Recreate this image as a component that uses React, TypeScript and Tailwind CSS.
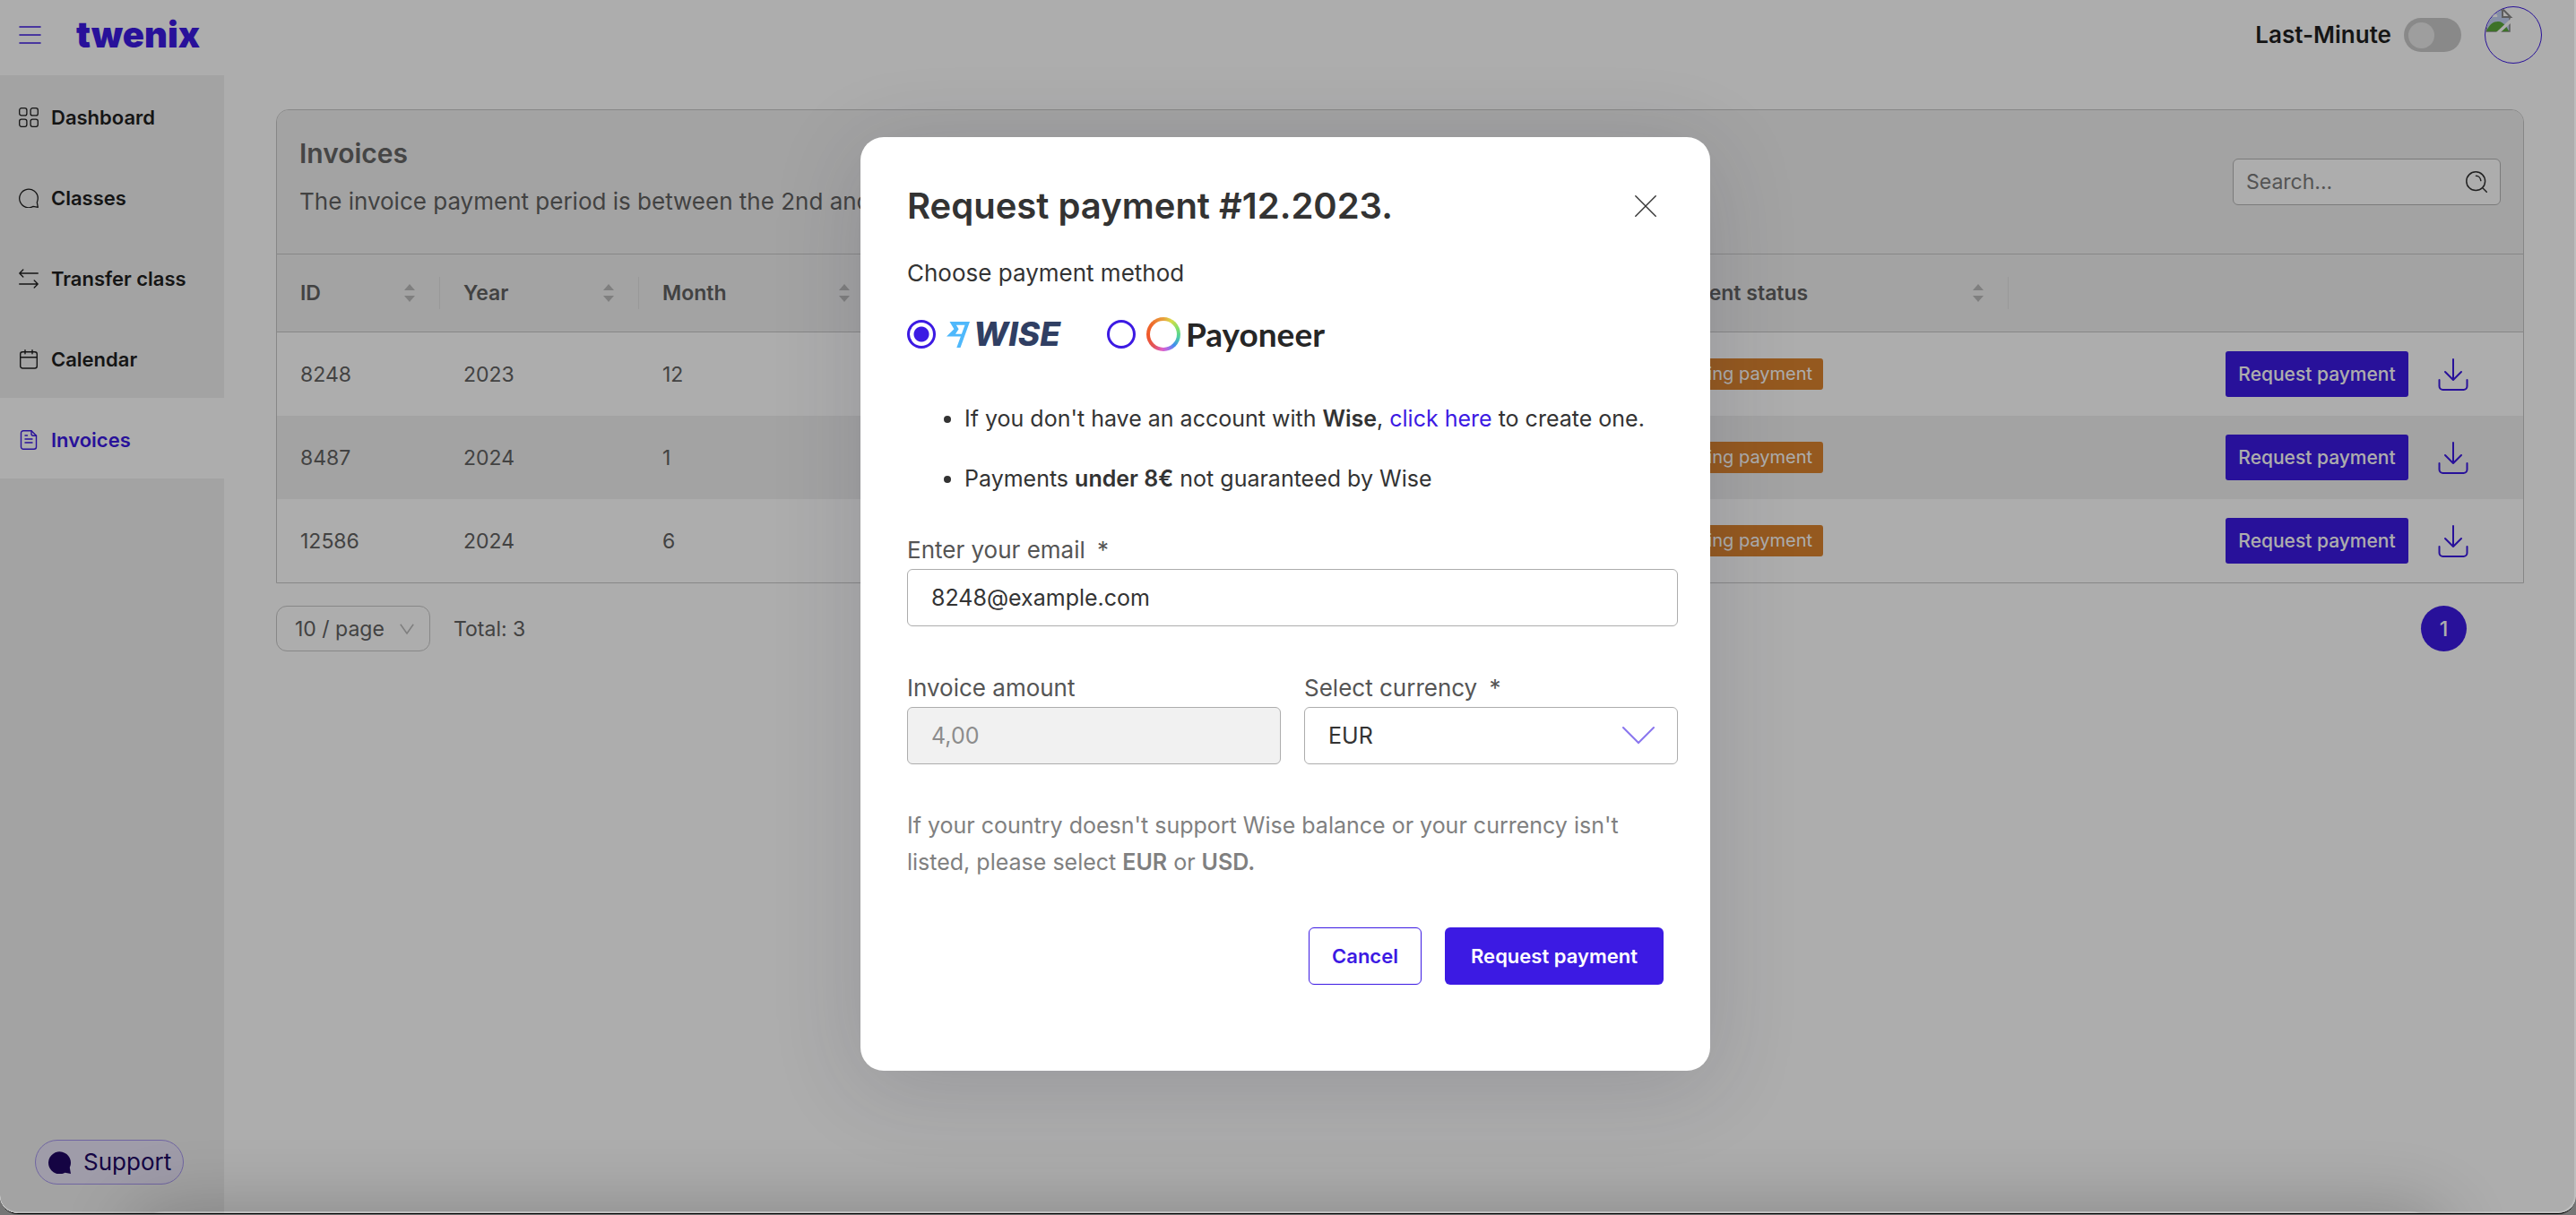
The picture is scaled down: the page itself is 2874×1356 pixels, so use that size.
import React, { useState } from 'react';

const NAV = [
  { id: 'dashboard', label: 'Dashboard', icon: <DashboardIcon /> },
  { id: 'classes', label: 'Classes', icon: <ChatIcon /> },
  { id: 'transfer', label: 'Transfer class', icon: <TransferIcon /> },
  { id: 'calendar', label: 'Calendar', icon: <CalendarIcon /> },
  { id: 'invoices', label: 'Invoices', icon: <InvoiceIcon /> },
];

const INVOICES = [
  { id: 8248, year: 2023, month: 12, status: 'Pending payment' },
  { id: 8487, year: 2024, month: 1, status: 'Pending payment' },
  { id: 12586, year: 2024, month: 6, status: 'Pending payment' },
];

function DashboardIcon() {
  return (
    <svg viewBox="0 0 22 22" className="size-[22px]" fill="none" stroke="currentColor" strokeWidth="1.3">
      <rect x="0.7" y="0.7" width="8.2" height="8.2" rx="2.2" />
      <rect x="13.1" y="0.7" width="8.2" height="8.2" rx="2.2" />
      <rect x="0.7" y="13.1" width="8.2" height="8.2" rx="2.2" />
      <rect x="13.1" y="13.1" width="8.2" height="8.2" rx="2.2" />
    </svg>
  );
}

function ChatIcon() {
  return (
    <svg viewBox="0 0 22 22" className="size-[22px]" fill="none" stroke="currentColor" strokeWidth="1.3" strokeLinejoin="round">
      <path d="M21.3 21.3l-5.2-.9A10.3 10.3 0 1 1 21.3 11c0 1.9-.5 3.6-1 4.9z" />
    </svg>
  );
}

function TransferIcon() {
  return (
    <svg viewBox="0 0 22 22" className="size-[22px]" fill="none" stroke="currentColor" strokeWidth="1.3" strokeLinecap="round" strokeLinejoin="round">
      <path d="M21.3 5H.8M4.8 1L.8 5l4 4M.7 17h20.5M17.2 13l4 4-4 4" />
    </svg>
  );
}

function CalendarIcon() {
  return (
    <svg viewBox="0 0 22 22" className="size-[22px]" fill="none" stroke="currentColor" strokeWidth="1.4" strokeLinecap="round">
      <rect x="1.7" y="2.7" width="18.6" height="18.3" rx="2.5" />
      <path d="M1.7 8.7h18.6M7 .8v4M15 .8v4" />
    </svg>
  );
}

function InvoiceIcon() {
  return (
    <svg viewBox="0 0 22 22" className="size-[22px]" fill="none" stroke="currentColor" strokeWidth="1.4" strokeLinecap="round" strokeLinejoin="round">
      <path d="M14 .8H5A2.5 2.5 0 0 0 2.5 3.3v15.4A2.5 2.5 0 0 0 5 21.2h12a2.5 2.5 0 0 0 2.5-2.5V6.2z" />
      <path d="M14 .8v3.4a2 2 0 0 0 2 2h3.5M7 6h2.5M7 10h8M7 14h8" />
    </svg>
  );
}

function Sorter() {
  return (
    <svg viewBox="0 0 12 20" className="h-5 w-3 shrink-0" fill="#bcbcbc" aria-hidden="true">
      <path d="M6 0l6 7H0zM0 13h12l-6 7z" />
    </svg>
  );
}

function DownloadIcon() {
  return (
    <svg viewBox="0 0 34 36" className="h-9 w-[34px]" fill="none" stroke="currentColor" strokeWidth="2" strokeLinecap="round" strokeLinejoin="round">
      <path d="M17 1v22M8 15l9 9 9-9M1.5 24v7a4 4 0 0 0 4 4h23a4 4 0 0 0 4-4v-7" />
    </svg>
  );
}

function Header() {
  return (
    <header className="flex h-[84px] items-center justify-between pb-1.5 pl-[21px] pr-[38px]">
      <div className="flex items-center gap-[39px]">
        <button type="button" aria-label="Menu" className="text-[#3c1ae3]">
          <svg viewBox="0 0 25 20" className="h-5 w-[25px]" stroke="currentColor" strokeWidth="1.6" strokeLinecap="round">
            <path d="M1 1h23M1 10h23M1 19h23" />
          </svg>
        </button>
        <a href="#home" className="text-[40px] leading-[48px] font-black text-[#3c1ae3]">twenix</a>
      </div>
      <div className="flex items-center">
        <label htmlFor="last-minute" className="mr-3.5 text-[26px] leading-8 font-semibold text-[#1f1f1f]">Last-Minute</label>
        <input
          id="last-minute"
          type="checkbox"
          role="switch"
          className="mr-[26px] flex h-[38px] w-16 appearance-none items-center rounded-full bg-[#cbcbcb] px-[5px] before:size-[29px] before:rounded-full before:bg-[#e9e9e9] checked:justify-end checked:bg-[#3c1ae3]"
        />
        {/* broken avatar */}
        <div role="img" aria-label="Avatar" className="size-16 overflow-hidden rounded-full border border-[#3c1ae3]">
          <svg viewBox="0 0 64 64" className="size-16">
            <path d="M1 3h18l8 8v16H1z" fill="#c6d5f5" stroke="#8a8a8a" strokeWidth="1.5" />
            <path d="M1 27c3-8 8-11 13-11s9 4 12 11z" fill="#5aa83c" />
            <path d="M12 28l16-15v5L17 28z" fill="#fff" />
            <path d="M19 2v9h9z" fill="#fff" stroke="#8a8a8a" strokeWidth="2" />
            <path d="M2 11c2-4 6-5 9-4 2 1 3 3 2 4z" fill="#fff" />
          </svg>
        </div>
      </div>
    </header>
  );
}

function Sidebar() {
  const active = 'invoices';

  return (
    <aside className="flex w-[250px] shrink-0 flex-col justify-between bg-[#f1f1f1] pb-8">
      <nav>
        {NAV.map(item => (
          <a
            key={item.id}
            href={`#${item.id}`}
            className={`flex h-[90px] items-center gap-3.5 pl-[21px] pt-1 text-[22px] leading-7 font-semibold ${
              item.id === active ? 'bg-white text-[#3c1ae3]' : 'text-[#1f1f1f]'
            }`}
          >
            {item.icon}
            {item.label}
          </a>
        ))}
      </nav>
      <button
        type="button"
        className="ml-[39px] flex h-[50px] w-[166px] items-center gap-3.5 rounded-full border border-[#a596ee] bg-[#ebe6fa] pl-3.5 text-[26px] leading-8 text-[#200764]"
      >
        <svg viewBox="0 0 25 25" className="size-[25px]" fill="currentColor">
          <path d="M25 25l-6.500-1.200A12.500 12.500 0 1 1 25 12.500c0 2.500-.6 4-1.200 5.500z" />
        </svg>
        Support
      </button>
    </aside>
  );
}

function InvoiceTable() {
  return (
    <section>
      <div className="rounded-t-[14px] border border-[#c7c7c7]">
        <div className="flex h-[161px] items-center justify-between rounded-t-[13px] border-b border-[#c7c7c7] bg-[#f1f1f1] px-[25px]">
          <div className="pb-3.5">
            <h1 className="text-[30px] leading-10 font-semibold text-[#666]">Invoices</h1>
            <p className="mt-[18px] text-[26px] leading-8 text-[#626262]">
              The invoice payment period is between the 2nd and the 5th
            </p>
          </div>
          <div className="flex h-[52px] w-[299px] items-center rounded-md border border-[#b5b5b5] bg-white px-3.5">
            <input
              type="text"
              aria-label="Search"
              placeholder="Search..."
              className="min-w-0 flex-1 text-[23px] leading-7 outline-none placeholder:text-[#7c7c7c]"
            />
            <svg viewBox="0 0 24 24" className="size-6 text-[#333]" fill="none" stroke="currentColor" strokeWidth="1.5" strokeLinecap="round">
              <circle cx="11.2" cy="11.2" r="10.4" />
              <path d="M11.5 5.3a5.6 5.6 0 0 1 5.3 5.3M18.8 18.8l4.5 4.5" />
            </svg>
          </div>
        </div>

        <table className="w-full table-fixed border-separate border-spacing-0 text-left text-[23px] leading-7 text-[#626262]">
          <colgroup>
            <col className="w-[182px]" />
            <col className="w-[222px]" />
            <col className="w-[263px]" />
            <col />
            <col className="w-[422px]" />
            <col className="w-[574px]" />
          </colgroup>
          <thead className="bg-[#f1f1f1]">
            <tr>
              {['ID', 'Year', 'Month', '', 'Payment status'].map(col => (
                <th key={col} className="h-[87px] border-b border-[#c7c7c7] p-0 font-semibold">
                  <div className="flex h-9 items-center justify-between border-r border-[#e2e2e2] pl-[26px] pr-[27px]">
                    {col}
                    <Sorter />
                  </div>
                </th>
              ))}
              <th className="border-b border-[#c7c7c7] p-0" />
            </tr>
          </thead>
          <tbody>
            {INVOICES.map(inv => (
              <tr key={inv.id} className="even:bg-[#f1f1f1]">
                <td className="h-[93px] p-0 pl-[26px]">{inv.id}</td>
                <td className="p-0 pl-[26px]">{inv.year}</td>
                <td className="p-0 pl-[26px]">{inv.month}</td>
                <td className="p-0" />
                <td className="p-0 pl-[26px]">
                  <span className="inline-block rounded-[3px] bg-[#dc842f] px-3 text-[20px] leading-[35px] text-white">{inv.status}</span>
                </td>
                <td className="p-0">
                  <div className="flex items-center justify-end gap-[33px] pr-[61px] text-[#3c1ae3]">
                    <button type="button" className="h-[51px] w-[204px] rounded-[3px] bg-[#3c1ae3] text-[21px] leading-7 font-medium text-white">
                      Request payment
                    </button>
                    <button type="button" aria-label={`Download invoice ${inv.id}`}>
                      <DownloadIcon />
                    </button>
                  </div>
                </td>
              </tr>
            ))}
          </tbody>
        </table>
      </div>

      {/* Pagination */}
      <div className="mt-[25px] flex items-center justify-between pr-16 text-[23px] leading-7 text-[#626262]">
        <div className="flex items-center gap-[26px]">
          <div className="relative">
            <select aria-label="Page size" className="h-[51px] w-[172px] appearance-none rounded-xl border border-[#c7c7c7] bg-white pl-5">
              <option>10 / page</option>
              <option>20 / page</option>
            </select>
            <svg viewBox="0 0 16 12" className="pointer-events-none absolute right-[18px] top-5 h-3 w-4" fill="none" stroke="#bcbcbc" strokeWidth="1.6">
              <path d="M.8.8L8 11 15.2.8" />
            </svg>
          </div>
          <span>Total: 3</span>
        </div>
        <button type="button" aria-current="page" className="size-[51px] rounded-full bg-[#3c1ae3] font-medium text-white">1</button>
      </div>
    </section>
  );
}

function WiseLogo() {
  return (
    <span className="flex items-center gap-1" aria-label="Wise">
      <svg viewBox="0 0 26 29" className="h-[29px] w-[26px]" fill="#4fb8fb">
        <path d="M3.5 0H26L15.5 29h-4.2L20.5 3.800H10.800l2.800 4.400-3.600 5.600h7.200l-1 2.700H0l8.400-8.300z" />
      </svg>
      <span className="text-[37px] leading-10 font-extrabold italic text-[#303f63]">WISE</span>
    </span>
  );
}

function PayoneerLogo() {
  return (
    <span className="flex items-center gap-1.5">
      <span className="size-[38px] rounded-full bg-[conic-gradient(#e8a03c,#d8dc48_30deg,#7ddf6a_70deg,#4fd0a0_100deg,#3f8ef0_135deg,#b06ae6_165deg,#e05fc4_185deg,#e05560_215deg,#f0562a_260deg,#ee6a2c_310deg,#e8a03c)] p-1">
        <span className="block size-full rounded-full bg-white" />
      </span>
      <span className="font-['Lato'] text-[37px] leading-10 font-bold text-[#262626]">Payoneer</span>
    </span>
  );
}

function RequestPaymentModal() {
  const [method, setMethod] = useState('wise');
  const [email, setEmail] = useState('8248@example.com');
  const [currency, setCurrency] = useState('EUR');

  const radio =
    'size-8 appearance-none rounded-full border-[3px] border-[#3c1ae3] bg-white checked:bg-[radial-gradient(circle,#3c1ae3_8px,transparent_9px)]';
  const field = 'h-16 w-full rounded-md border border-[#adadad] pl-[26px] text-[25px] leading-8';

  return (
    <div
      role="dialog"
      aria-modal="true"
      aria-labelledby="modal-title"
      className="relative w-[948px] rounded-[26px] bg-white pb-24 pl-[52px] pr-9 pt-[53px] text-[26px] leading-8 text-[#333] shadow-[0_16px_100px_rgba(40,40,60,0.16)]"
    >
      <div className="flex items-center justify-between pr-6">
        <h2 id="modal-title" className="text-[40px] leading-12 font-semibold">Request payment #12.2023.</h2>
        <button type="button" aria-label="Close">
          <svg viewBox="0 0 24 24" className="size-6" stroke="currentColor" strokeWidth="1.4" strokeLinecap="round">
            <path d="M.8.8l22.4 22.4M23.2.8L.8 23.2" />
          </svg>
        </button>
      </div>

      <p className="mt-[35px]">Choose payment method</p>
      <div className="mt-8 flex items-center gap-[52px]">
        <label className="flex items-center gap-3">
          <input type="radio" name="method" className={radio} checked={method === 'wise'} onChange={() => setMethod('wise')} />
          <WiseLogo />
        </label>
        <label className="flex items-center gap-3">
          <input type="radio" name="method" className={radio} checked={method === 'payoneer'} onChange={() => setMethod('payoneer')} />
          <PayoneerLogo />
        </label>
      </div>

      <ul className="mt-[58px] flex list-disc flex-col gap-[35px] pl-16 text-[25px] leading-8">
        <li>
          If you don't have an account with <b className="font-semibold">Wise</b>, <a href="#wise" className="text-[#3c1ae3]">click here</a> to create one.
        </li>
        <li>
          Payments <b className="font-semibold">under 8€</b> not guaranteed by Wise
        </li>
      </ul>

      <form onSubmit={e => e.preventDefault()}>
        <div className="mt-12 flex flex-col gap-[5px]">
          <label htmlFor="email" className="text-[#555]">
            Enter your email <span className="ml-1.5">*</span>
          </label>
          <input id="email" type="email" className={field} value={email} onChange={e => setEmail(e.target.value)} />
        </div>

        <div className="mt-[53px] grid grid-cols-2 gap-[26px]">
          <div className="flex flex-col gap-[5px]">
            <label htmlFor="amount" className="text-[#555]">Invoice amount</label>
            <input id="amount" type="text" disabled value="4,00" className={`${field} bg-[#f1f1f1] text-[#8c8c8c]`} />
          </div>
          <div className="flex flex-col gap-[5px]">
            <label htmlFor="currency" className="text-[#555]">
              Select currency <span className="ml-1.5">*</span>
            </label>
            <div className="relative">
              <select id="currency" className={`${field} appearance-none`} value={currency} onChange={e => setCurrency(e.target.value)}>
                <option>EUR</option>
                <option>USD</option>
              </select>
              <svg viewBox="0 0 36 20" className="pointer-events-none absolute right-[26px] top-[22px] h-5 w-9" fill="none" stroke="#8a76ee" strokeWidth="2" strokeLinecap="round">
                <path d="M1 1l17 17L35 1" />
              </svg>
            </div>
          </div>
        </div>

        <p className="mt-12 text-[25px] leading-[41px] text-[#808080]">
          If your country doesn't support Wise balance or your currency isn't listed, please select <b className="font-semibold">EUR</b> or{' '}
          <b className="font-semibold">USD.</b>
        </p>

        <div className="mt-13 flex justify-end gap-[26px] pr-4 text-[22px] leading-7 font-semibold">
          <button type="button" className="h-16 w-[126px] rounded-md border border-[#3c1ae3] text-[#3c1ae3]">Cancel</button>
          <button type="submit" className="h-16 w-[244px] rounded-md bg-[#3c1ae3] text-white">Request payment</button>
        </div>
      </form>
    </div>
  );
}

export default function App() {
  return (
    <div className="flex min-h-screen flex-col bg-[#767676] pb-px font-['Inter',sans-serif]">
      <div className="relative flex flex-1 flex-col overflow-hidden rounded-b-[20px] border-b border-black bg-white">
        <Header />
        <div className="flex flex-1">
          <Sidebar />
          <main className="min-w-0 flex-1 px-[58px] pt-[38px]">
            <InvoiceTable />
          </main>
        </div>

        {/* Backdrop */}
        <div className="absolute inset-0 flex items-start justify-center rounded-b-[20px] border-r-2 border-b-2 border-white/20 bg-black/32 pr-1 pt-[153px]">
          <div className="pointer-events-none absolute inset-x-36 -bottom-20 h-20 rounded-full shadow-[0_0_80px_rgba(0,0,0,0.24)]" />
          <RequestPaymentModal />
        </div>
      </div>
    </div>
  );
}
